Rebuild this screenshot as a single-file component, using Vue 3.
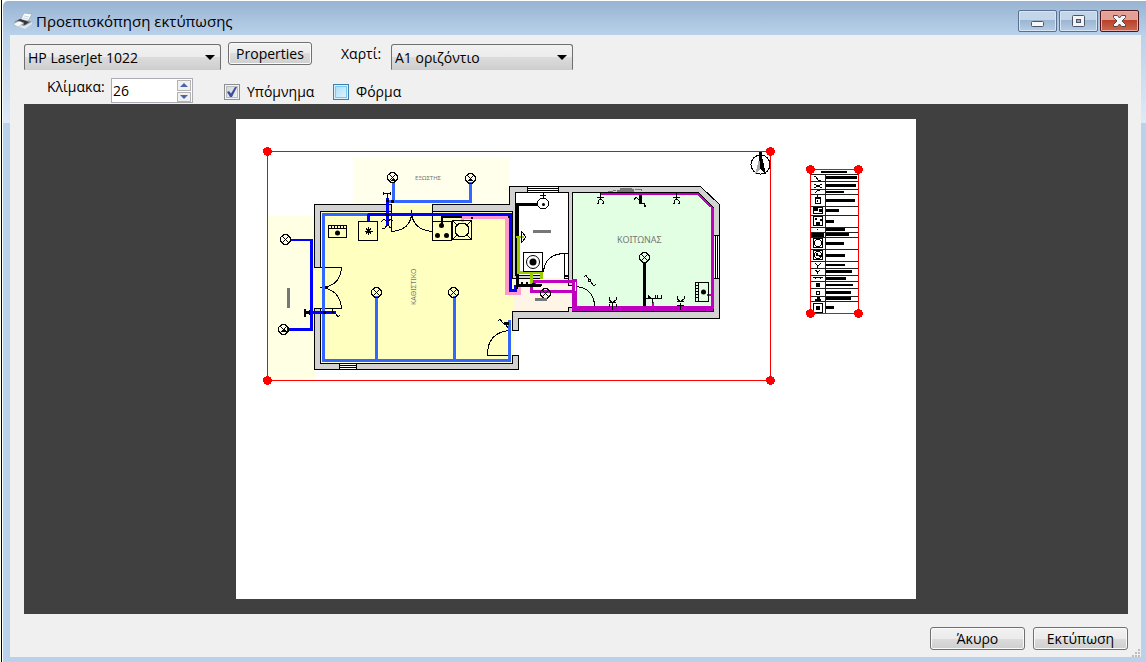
<script setup>
import { ref } from 'vue'

const printer = ref('HP LaserJet 1022')
const paper = ref('A1 οριζόντιο')
const scale = ref('26')
const showLegend = ref(true)
const showForm = ref(false)

const step = (delta) => {
  scale.value = String(Number(scale.value) + delta)
}

const lamps = [
  [285, 239], [283, 329], [392, 177], [470, 178], [376, 292],
  [453, 292], [644, 257], [545, 293],
]

const legendLines = [174, 181, 189, 194, 206, 215, 227, 232, 237, 249, 261, 268, 275, 281, 288, 296, 301]
const legendBars = [
  [176, 31, 3], [184, 30, 3], [191, 18, 2], [199, 29, 3], [209, 13, 3], [220, 8, 3],
  [228, 19, 3], [233, 23, 3], [242, 18, 3], [254, 19, 3], [264, 19, 2], [270, 26, 3],
  [277, 20, 3], [284, 27, 2], [291, 25, 3], [297, 25, 3], [306, 8, 3],
]
const planCorners = [[267, 151], [770, 151], [267, 380], [770, 380]]
const legendCorners = [[810, 169], [858, 169], [810, 313], [858, 313]]
</script>

<template>
  <div class="desktop">
    <main class="window">
      <header class="titlebar">
        <svg class="app-icon" viewBox="0 0 20 18" aria-hidden="true">
          <path d="M7 9 11 1l8 1-5 9z" fill="#fafcfd" stroke="#8e9dab" stroke-width=".6" />
          <path d="M11 4l5 1M10 6l5 1" stroke="#b9c6d0" stroke-width=".7" />
          <path d="M2 9l5-2 10 2 2 2-8 5-10-4z" fill="#8d969b" />
          <path d="M4 9l3-2 9 3-4 3z" fill="#30383d" />
          <path d="M2 11l9 3 8-4v2l-7 5-11-4z" fill="#dfe5e8" />
          <path d="M0 12l6-3 5 2-6 4z" fill="#f5f7f8" stroke="#98a3aa" stroke-width=".5" />
        </svg>
        <h1>Προεπισκόπηση εκτύπωσης</h1>
        <div class="caption-buttons">
          <button type="button" class="cap" aria-label="Ελαχιστοποίηση">
            <svg viewBox="0 0 37 20"><rect x="12.5" y="10.5" width="12" height="5" rx="1" fill="#f7f7f7" stroke="#4b5468" /></svg>
          </button>
          <button type="button" class="cap" aria-label="Μεγιστοποίηση">
            <svg viewBox="0 0 37 20"><rect x="12.5" y="4.5" width="12" height="11" rx="1" fill="#f4f4f4" stroke="#4b5468" /><rect x="16.5" y="8.5" width="4" height="3" fill="#8faed0" stroke="#4b5468" /></svg>
          </button>
          <button type="button" class="cap close" aria-label="Κλείσιμο">
            <svg viewBox="0 0 37 20"><path d="M12.500 4.500h4l2 2.500 2-2.500h4v2l-3.500 3.500 3.500 3.500v2h-4l-2-2.500-2 2.500h-4v-2l3.500-3.500-3.500-3.500z" fill="#f6f6f6" stroke="#554350" /></svg>
          </button>
        </div>
      </header>

      <section class="body">
        <form class="tools" @submit.prevent>
          <div class="row first">
            <div class="combo printer">
              <select v-model="printer" aria-label="Εκτυπωτής"><option>HP LaserJet 1022</option></select>
            </div>
            <button type="button" class="btn props">Properties</button>
            <label class="paper-label" for="paper">Χαρτί:</label>
            <div class="combo paper-size">
              <select id="paper" v-model="paper"><option>A1 οριζόντιο</option></select>
            </div>
          </div>
          <div class="row second">
            <label class="scale-label" for="scale">Κλίμακα:</label>
            <div class="spin">
              <input id="scale" v-model="scale" type="text" inputmode="numeric" />
              <div class="arrows">
                <button type="button" class="up" aria-label="Αύξηση" @click="step(1)"></button>
                <button type="button" class="down" aria-label="Μείωση" @click="step(-1)"></button>
              </div>
            </div>
            <label class="check legend-check"><input v-model="showLegend" type="checkbox" /><span>Υπόμνημα</span></label>
            <label class="check form-check"><input v-model="showForm" class="hot" type="checkbox" /><span>Φόρμα</span></label>
          </div>
        </form>

        <div class="preview">
          <svg class="sheet" viewBox="236 119 680 480" shape-rendering="crispEdges" role="img" aria-label="Κάτοψη">
            <rect x="236" y="119" width="680" height="480" fill="#fff" />

            <!-- floor areas -->
            <rect x="353" y="158" width="157" height="47" fill="#ffffec" />
            <rect x="268" y="216" width="47" height="163" fill="#ffffe3" />
            <rect x="315" y="205" width="198" height="164" fill="#ffffc0" />
            <rect x="513" y="278" width="60" height="34" fill="#fff5e6" />
            <path d="M573 193H698L713 208V311H573z" fill="#e3ffe3" />

            <!-- walls -->
            <g fill="#d2d2d2" stroke="#000">
              <path d="M314.500 267.500V204.500H391.500V211.500H320.500V267.500z" />
              <path d="M314.500 308.500H320.500V363.500H512.500V355.500H518.500V369.500H314.500z" />
              <path d="M432.500 204.500H509.500V186.500H700.500L719.500 204.500V318.500H518.500V330.500H512.500V311.500H568.500V307.500H572.500V311.500H713.500V207.500L698.500 192.500H572.500V285.500H568.500V192.500H515.500V275.500H541.500V278.500H512.500V211.500H432.500z" />
            </g>
            <g fill="#fff" stroke="#000">
              <path d="M527.500 186.500h31v6h-31zM527.500 188.500h31M527.500 190.500h31" />
              <path d="M339.500 363.500h17v6h-17zM339.500 365.500h17M339.500 367.500h17" />
              <path d="M713.500 235.500h6v43h-6zM715.500 235.500v43M717.500 235.500v43" />
              <path d="M564.500 253.500h4v22h-4zM564.500 276.500h4v2h-4z" />
            </g>

            <!-- doors -->
            <g fill="none" stroke="#000">
              <path d="M391.500 212V231.500Q411 230 411.500 213Q413 230 432.500 231.500V212M411.500 210v8" />
              <path d="M320.500 267.500H341.500Q340 287 320 287.500Q340 289 341.500 308.500H320.500" />
              <path d="M320 287.500h8" />
              <path d="M509 330.500Q487 333 487.500 355.500H509" />
              <path d="M564.500 253.500Q545 254 543.500 272" />
              <path d="M577 286.500Q594 289 594.500 306" />
            </g>

            <!-- circuits -->
            <g fill="none" stroke-width="3">
              <path d="M462.500 222V217.500H508" stroke="#ff99cc" />
              <path d="M506.500 216V292.500H518.500V285" stroke="#ff99cc" stroke-width="4" />
              <path d="M369 214.500H323.500V360.500H509.500V320M376.500 296V360M454.500 296V360M393.500 182V201.500M387 201.500H472M470.500 182V201.500" stroke="#3366ff" />
              <path d="M441.500 226V216.500H462" stroke="#000" stroke-width="2" />
              <path d="M368 214.500H510.500V290.500H515.500V285M368.500 214V222M387.500 198V226M311.500 240V329.500H287M312 312.500H336" stroke="#0000ff" />
              <path d="M290 240H313" stroke="#0000ff" stroke-width="2" />
              <path d="M538 204.500H517.500V285.500H541M644.500 262V308M640.500 192V204" stroke="#000" />
              <path d="M518.500 236V272.500H541.500V279M531.500 272V284" stroke="#99cc00" />
              <path d="M516 237h8" stroke="#99cc00" stroke-width="2" />
              <path d="M534 284V281H574M531.500 286V291.500H574" stroke="#bf00bf" />
              <path d="M574.500 279V308.500H713" stroke="#bf00bf" stroke-width="5" />
              <path d="M600 194H698L712.500 208V309" stroke="#bf00bf" stroke-width="2" />
              <path d="M712 208V309" stroke="#bf00bf" stroke-width="3" />
              <path d="M707 295H713M653 302V308" stroke="#bf00bf" stroke-width="2" />
              <path d="M575.500 282V291" stroke="#fff" stroke-width="1" />
            </g>
            <path d="M504 322h5v3h-5zM518 284h3v-2h2v2h3v-2h2v2h4v-1h3v2h5v2h-22v2h-2zM304 309h2v2h3v-1h1v5h-1v-1h-3v3h-2zM385 213h4v3h-4zM391 200h3v3h-3zM386 200h3v2h-3zM323 311h3v3h-3zM471 217h2v2h-2zM508 216h2v2h-2zM540 284h2v2h-2z" />

            <!-- light points -->
            <g v-for="(p, i) in lamps" :key="i" :transform="`translate(${p[0]} ${p[1]})`" fill="none" stroke="#000">
              <circle cx=".5" cy=".5" r="5" />
              <path d="M-3 -3 4 4M4 -3 -3 4" />
            </g>
            <path d="M390 181h6l-3-3zM467 181h6l-3-3zM281 332h6l-3-3z" />

            <!-- appliances -->
            <g fill="none" stroke="#000">
              <path d="M328.500 225.500h18v12h-18zM328.500 228.500h18M331.500 225v3M334.500 225v3M337.500 225v3M340.500 225v3M343.500 225v3" />
              <path d="M358.500 221.500h19v19h-19zM368.500 227v8M365 231.500h8M366 228.500l5 5M371 228.500l-5 5" />
              <path d="M432.500 221.500h19v19h-19zM452.500 220.500h19v19h-19zM453 221l5 5M471 221l-5 5M453 239l5-5M471 239l-5-5" />
              <circle cx="462" cy="230" r="7" />
              <circle cx="543" cy="203.500" r="5.500" />
              <path d="M543.500 192v6M540 195.500h6M521.500 231v12M522 232l4 5-4 5" />
              <path d="M523.500 252.500h19v19h-19z" fill="#fff" />
              <circle cx="533" cy="262" r="6.500" shape-rendering="auto" />
              <path d="M695.500 282.500h13v19h-13zM698.500 282v19M695 285.500h3M695 288.500h3M695 291.500h3M695 294.500h3M695 297.500h3" />
            </g>
            <g shape-rendering="auto">
              <circle cx="337.500" cy="233" r="2.500" />
              <circle cx="441.500" cy="225.500" r="2.500" />
              <circle cx="437.500" cy="235.500" r="2.500" />
              <circle cx="446.500" cy="235.500" r="2.500" />
              <circle cx="543.500" cy="204.500" r="1.500" />
              <circle cx="533" cy="262" r="3.500" />
              <circle cx="703.500" cy="292" r="2.500" />
            </g>

            <!-- sockets and switches -->
            <g fill="none" stroke="#000">
              <path d="M600.500 193v7M597 197.500h7M598 204v-3l2-2h1l2 2v3M597 203.500h2M602 203.500h2" />
              <path d="M676.500 193v7M673 197.500h7M674 204v-3l2-2h1l2 2v3M673 203.500h2M678 203.500h2" />
              <path d="M612.500 310v-7M609 302.500h7M609 306.500v-3M616 306.500v-3M609 297v3l3 2h1l3-2v-3" />
              <path d="M680.500 310v-7M677 301.500h7M677 296v3l3 2h1l3-2v-3M677 305.500h7" />
              <path d="M634 200l2-3 3 3M642 203l2 0 1 4 1-2" />
              <path d="M584 277l2-2 3 5M590 281l4 5 2-2M588.500 279.500h2v2h-2z" />
              <path d="M646 298.500h16M648.500 298v-2l2 2M655.500 298v-3M657.500 298v-3M661.500 298v-3M652.500 298v5" />
              <path d="M498 321l2-2 3 4 3 2 2 3" />
              <path d="M383 193.500h8M383.500 192v3M390.500 192v3M387.500 193v6M381 222l3-3 3 3 4-3 2 2M382 228h3l3-4 2 4 2-1M332 309v3l4 2 2 3 2-2" />
            </g>

            <!-- room labels -->
            <g class="room">
              <text x="415" y="180" font-size="6">ΕΞΩΣΤΗΣ</text>
              <text x="617" y="243" font-size="9">ΚΟΙΤΩΝΑΣ</text>
              <text transform="translate(416 305) rotate(-90)" font-size="7">ΚΑΘΙΣΤΙΚΟ</text>
            </g>
            <path d="M287 288h3v20h-3zM533 230h18v3h-18zM535 298h12v3h-12zM620 188h12v1h2v3h-17v-2h3zM608 191h5v1h-5zM613 190h3v1h-3zM635 189h7v2h-1v-1h-6z" fill="#777" />

            <!-- compass -->
            <circle cx="760.500" cy="164.500" r="9.500" fill="#fff" stroke="#000" />
            <path d="M760 156L755 174L760 169z" fill="#aaa" />
            <path d="M759 152h3v5l4 17-6-5z" />

            <!-- plan frame -->
            <rect x="267.500" y="151.500" width="503" height="229" fill="none" stroke="red" />
            <circle v-for="(c, i) in planCorners" :key="'p' + i" :cx="c[0] + 0.5" :cy="c[1] + 0.5" r="4.500" fill="red" />

            <!-- legend -->
            <g v-if="showLegend">
              <path v-for="y in legendLines" :key="y" :d="`M811 ${y}.5h47`" stroke="#222" />
              <path d="M825.500 174V313" stroke="#222" />
              <rect x="821" y="171" width="26" height="2" />
              <rect v-for="b in legendBars" :key="b[0]" x="826" :y="b[0]" :width="b[1]" :height="b[2]" />
              <rect x="811" y="233" width="13" height="4" />
              <g fill="none" stroke="#000">
                <path d="M814 176l2 1 2 3 3 1M814 184l8 4M822 184l-8 4M815 193l3-3 2 1" />
                <circle cx="818" cy="201" r="3" />
                <path d="M817.500 195v3M817.500 200v2M815 197.500h6M813.500 207.500h9v6h-9zM813.500 216.500h9v9h-9zM813.500 238.500h9v9h-9zM813.500 250.500h9v9h-9zM813.500 303.500h9v9h-9z" />
                <circle cx="818" cy="243" r="3.500" />
                <circle cx="818" cy="255" r="3.500" />
                <path d="M815 263l2 2h2l2-2M817.500 265v3M815 270l3 2 2-2M817.500 272v2M813 277.500h10M815.500 277v2M820.500 277v2" />
                <circle cx="818" cy="285" r="2" />
                <circle cx="818" cy="293" r="2" />
              </g>
              <path d="M814 207h4v4h-4zM819 209h3v3h-3zM815 218h2v2h-2zM820 219h2v2h-2zM816 222h4v3h-4zM817 229h1v1h-1zM816 253h2v2h3v2h-2v-1h-3zM817 283h2v4h-2zM815 299h6v2h-6zM817 297h3v2h-3zM816 306h4v4h-4z" />
              <rect x="810.500" y="169.500" width="48" height="144" fill="none" stroke="red" />
              <circle v-for="(c, i) in legendCorners" :key="'l' + i" :cx="c[0] + 0.5" :cy="c[1] + 0.5" r="4.500" fill="red" />
            </g>
          </svg>
        </div>

        <footer class="actions">
          <button type="button" class="btn">Άκυρο</button>
          <button type="button" class="btn">Εκτύπωση</button>
          <svg class="grip" viewBox="0 0 8 8" aria-hidden="true"><path d="M6 0h2v2H6zM3 3h2v2H3zM6 3h2v2H6zM0 6h2v2H0zM3 6h2v2H3zM6 6h2v2H6z" fill="#bdbdbd" /></svg>
        </footer>
      </section>
    </main>
  </div>
</template>

<style>
body { background: #b9d1ea; }
</style>

<style scoped>
* { box-sizing: border-box; }
.desktop {
  min-height: 100vh;
  padding: 1px 0 0 3px;
  display: flex;
  background: linear-gradient(90deg, #ffffe3 1px, #000 1px 2px, #fff 2px);
  font-family: "Open Sans", "Noto Sans", sans-serif;
  font-size: 14px;
  color: #000;
}
.window {
  flex: 1;
  display: flex;
  flex-direction: column;
  padding: 0 5px 5px 7px;
  border-top-left-radius: 5px;
  background:
    linear-gradient(#98b4d2, #b9d1ea) 0 0 / 100% 34px no-repeat,
    linear-gradient(#b9d1ea, #dfeaf7) 0 34px / 100% 88px no-repeat,
    #b9d1ea;
}
.titlebar {
  height: 34px;
  display: flex;
  align-items: center;
  padding: 5px 2px 0 3px;
}
.app-icon { width: 20px; height: 18px; }
h1 { margin: 0 0 0 3px; flex: 1; font-size: 15px; font-weight: 400; line-height: 20px; }
.caption-buttons { display: flex; gap: 2px; }
.cap {
  width: 39px;
  height: 22px;
  padding: 0;
  border: 1px solid #5b6f90;
  border-radius: 2px;
  background: linear-gradient(#c3d5e9 45%, #9bb5d0 45%, #b4cde8);
  box-shadow: inset 0 0 0 1px #d6e4f3;
}
.cap svg { display: block; width: 37px; height: 20px; }
.close {
  border-color: #4a1520;
  background: linear-gradient(#e3a095 45%, #b8402a 45%, #cc6a50);
  box-shadow: inset 0 0 0 1px #e8b0a5;
}
.body {
  flex: 1;
  display: flex;
  flex-direction: column;
  padding: 0 13px 0 14px;
  background: #f0f0f0;
}
.tools { height: 69px; padding-top: 7px; }
.row { display: flex; align-items: flex-start; }
.first { height: 36px; }
.combo {
  position: relative;
  height: 26px;
  margin-top: 2px;
}
.printer { width: 197px; }
.paper-size { width: 182px; margin-left: 11px; }
.combo::after {
  content: "";
  position: absolute;
  right: 6px;
  top: 11px;
  border: 5px solid transparent;
  border-top-color: #000;
  border-bottom: 0;
  pointer-events: none;
}
select {
  appearance: none;
  width: 100%;
  height: 26px;
  padding: 1px 20px 0 3px;
  border: 1px solid #707070;
  border-bottom-color: #ccc;
  border-radius: 3px 3px 0 0;
  background: linear-gradient(#f2f2f2, #ebebeb 50%, #dcdcdc 50%, #cfcfcf);
  font: inherit;
  color: #000;
}
.btn {
  height: 23px;
  padding: 1px 0 0;
  border: 1px solid #707070;
  border-radius: 3px;
  background: linear-gradient(#f2f2f2, #ebebeb 50%, #dcdcdc 50%, #cfcfcf);
  box-shadow: inset 0 0 0 1px #fafafa;
  font: inherit;
  line-height: 20px;
  color: #000;
}
.props { width: 84px; margin-left: 7px; }
.paper-label { width: 39px; margin-left: 29px; line-height: 24px; white-space: nowrap; }
.scale-label { width: 56px; margin-left: 23px; line-height: 18px; white-space: nowrap; }
.spin {
  width: 82px;
  height: 25px;
  margin-left: 8px;
  display: flex;
  border: 1px solid #abadb3;
  background: #fff;
}
.spin input {
  flex: 1;
  min-width: 0;
  padding: 0 1px;
  border: 0;
  outline: 0;
  background: none;
  font: inherit;
}
.arrows { width: 15px; display: flex; flex-direction: column; gap: 1px; padding: 1px 1px 0 0; }
.arrows button {
  flex: 1;
  padding: 0;
  border: 1px solid #b4b4b4;
  background: #f0f0f0;
  display: grid;
  place-items: center;
}
.arrows button::before { content: ""; border: 4px solid transparent; }
.arrows .up::before { border-bottom-color: #4a62ac; border-top: 0; }
.arrows .down::before { border-top-color: #4a62ac; border-bottom: 0; }
.check { display: flex; align-items: center; gap: 7px; margin-top: 4px; line-height: 20px; }
.legend-check { width: 88px; margin-left: 31px; }
.form-check { margin-left: 21px; }
.check input {
  appearance: none;
  flex: none;
  width: 16px;
  height: 16px;
  margin: 0;
  border: 1px solid #8e8f8f;
  background: linear-gradient(135deg, #ccd0d6, #f6f6f6);
  box-shadow: inset 0 0 0 1px #f4f4f4, inset 0 0 0 2px #b7bcc3;
  display: grid;
  place-items: center;
}
.check input:checked::before {
  content: "";
  width: 10px;
  height: 10px;
  background: #40509c;
  clip-path: polygon(0 50%, 20% 40%, 40% 65%, 80% 0, 100% 0, 50% 100%, 30% 100%);
}
.check .hot {
  border-color: #3c7fb1;
  background: linear-gradient(135deg, #a5dcf9, #e4f7ff);
  box-shadow: inset 0 0 0 1px #d8f1fd, inset 0 0 0 2px #7cc8f0;
}
.preview {
  flex: 1;
  display: flex;
  justify-content: center;
  align-items: center;
  padding: 15px;
  background: #404040;
}
.sheet { display: block; width: 680px; max-width: 100%; }
.room { font-family: "Noto Sans", sans-serif; fill: #777; }
.actions {
  position: relative;
  height: 43px;
  padding-top: 13px;
  display: flex;
  justify-content: flex-end;
  gap: 8px;
}
.actions .btn { width: 95px; }
.grip { position: absolute; right: -12px; bottom: 0; width: 8px; height: 8px; }
</style>
